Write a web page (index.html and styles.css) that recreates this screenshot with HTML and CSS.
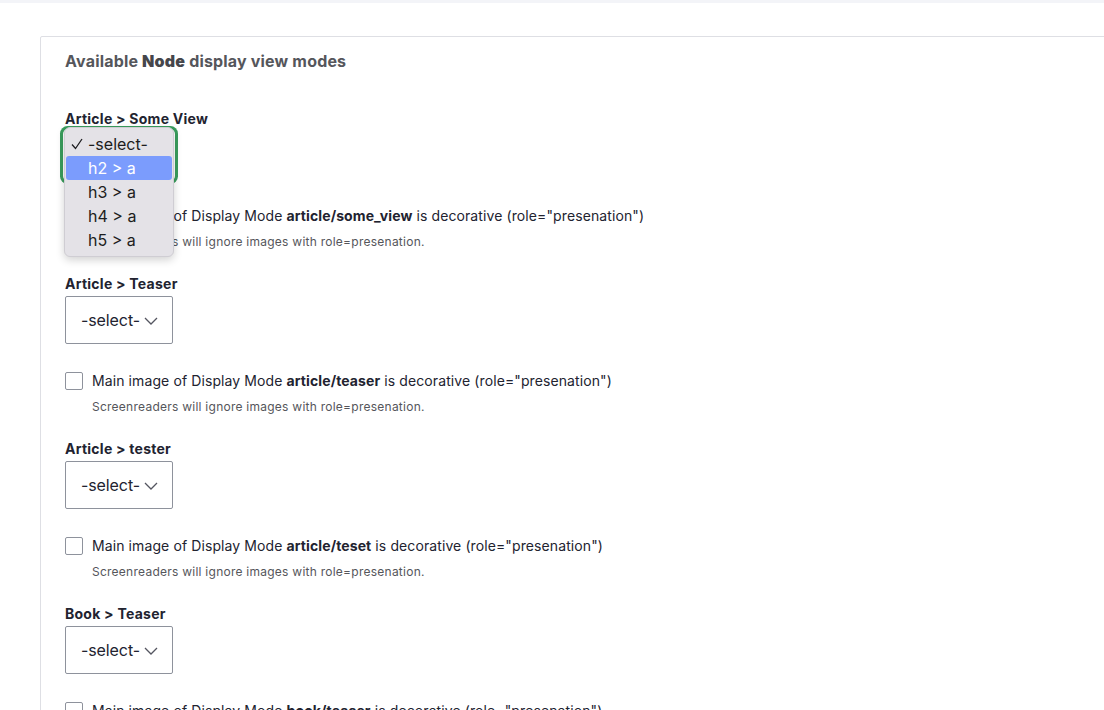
FILE: index.html
```html
<!DOCTYPE html>
<html>
<head>
<meta charset="utf-8">
<link rel="stylesheet" href="styles.css">
</head>
<body>
<div class="topbar"></div>
<div class="page">
  <section class="card">
    <h2 class="card-title">Available <b>Node</b> display view modes</h2>

    <div class="form-item">
      <div class="label">Article &gt; Some View</div>
      <div class="select-wrap">
        <div class="select is-focused">
          <span>-select-</span>
          <svg class="chev" width="14" height="8" viewBox="0 0 14 8"><polyline points="1,1 7,7 13,1" fill="none" stroke="#545560" stroke-width="1.3"/></svg>
        </div>
        <div class="popup">
          <div class="opt"><svg class="check" width="12" height="12" viewBox="0 0 12 12"><polyline points="1,6.5 4.5,10.5 11,1" fill="none" stroke="#1d1d20" stroke-width="1.3"/></svg>-select-</div>
          <div class="opt hl">h2 &gt; a</div>
          <div class="opt">h3 &gt; a</div>
          <div class="opt">h4 &gt; a</div>
          <div class="opt">h5 &gt; a</div>
        </div>
      </div>
      <div class="check-row">
        <span class="box"></span>
        <span class="check-label">Main image of Display Mode <b>article/some_view</b> is decorative (role="presenation")</span>
      </div>
      <div class="desc">Screenreaders will ignore images with role=presenation.</div>
    </div>

    <div class="form-item">
      <div class="label">Article &gt; Teaser</div>
      <div class="select-wrap">
        <div class="select">
          <span>-select-</span>
          <svg class="chev" width="14" height="8" viewBox="0 0 14 8"><polyline points="1,1 7,7 13,1" fill="none" stroke="#545560" stroke-width="1.3"/></svg>
        </div>
      </div>
      <div class="check-row">
        <span class="box"></span>
        <span class="check-label">Main image of Display Mode <b>article/teaser</b> is decorative (role="presenation")</span>
      </div>
      <div class="desc">Screenreaders will ignore images with role=presenation.</div>
    </div>

    <div class="form-item">
      <div class="label">Article &gt; tester</div>
      <div class="select-wrap">
        <div class="select">
          <span>-select-</span>
          <svg class="chev" width="14" height="8" viewBox="0 0 14 8"><polyline points="1,1 7,7 13,1" fill="none" stroke="#545560" stroke-width="1.3"/></svg>
        </div>
      </div>
      <div class="check-row">
        <span class="box"></span>
        <span class="check-label">Main image of Display Mode <b>article/teset</b> is decorative (role="presenation")</span>
      </div>
      <div class="desc">Screenreaders will ignore images with role=presenation.</div>
    </div>

    <div class="form-item">
      <div class="label">Book &gt; Teaser</div>
      <div class="select-wrap">
        <div class="select">
          <span>-select-</span>
          <svg class="chev" width="14" height="8" viewBox="0 0 14 8"><polyline points="1,1 7,7 13,1" fill="none" stroke="#545560" stroke-width="1.3"/></svg>
        </div>
      </div>
      <div class="check-row">
        <span class="box"></span>
        <span class="check-label">Main image of Display Mode <b>book/teaser</b> is decorative (role="presenation")</span>
      </div>
      <div class="desc">Screenreaders will ignore images with role=presenation.</div>
    </div>
  </section>
</div>
</body>
</html>
```

FILE: styles.css
```css
html, body {
  margin: 0;
  padding: 0;
  overflow: hidden;
  background: #fff;
  font-family: Inter, "Liberation Sans", sans-serif;
  color: #222330;
}
.topbar {
  height: 3px;
  background: #f3f4f8;
}
.page {
  padding: 33px 0 0 40px;
}
.card {
  width: 1120px;
  border: 1px solid #dedfe4;
  border-radius: 2px 0 0 0;
  padding: 14px 0 40px 24px;
  box-sizing: border-box;
}
.card-title {
  margin: 0;
  font-size: 16px;
  line-height: 20px;
  font-weight: 700;
  color: #55565b;
  letter-spacing: 0.18px;
}
.card-title b { color: #45464b; }
.form-item {
  margin-top: 25px;
}
.card-title + .form-item { margin-top: 39px; }
.label {
  font-size: 14px;
  line-height: 18px;
  font-weight: 700;
  color: #222330;
  margin-bottom: 3px;
  letter-spacing: 0.25px;
}
.select-wrap {
  position: relative;
  width: 108px;
}
.select {
  box-sizing: border-box;
  width: 108px;
  height: 48px;
  border: 1px solid #8e929c;
  border-radius: 2px;
  display: flex;
  align-items: center;
  padding-left: 15px;
  gap: 4px;
  font-size: 16px;
  color: #222330;
  background: #fff;
  letter-spacing: -0.1px;
}
.select.is-focused {
  box-shadow: 0 0 0 2px #fff, 0 0 0 5px #3a9d5d;
  border-radius: 3px;
}
.chev { flex: none; margin-top: 1px; }
.popup {
  position: absolute;
  left: -1px;
  top: -4px;
  width: 110px;
  box-sizing: border-box;
  padding: 4px 1px;
  background: #e4e2e7;
  border: 1px solid #cfcdd3;
  border-radius: 6px;
  box-shadow: 0 3px 8px rgba(0,0,0,0.18);
  z-index: 5;
}
.opt {
  position: relative;
  height: 24px;
  line-height: 24px;
  padding-left: 22px;
  font-size: 16px;
  color: #1d1d20;
  border-radius: 3px;
}
.opt.hl {
  background: #7b9cfd;
  color: #fff;
}
.check {
  position: absolute;
  left: 5px;
  top: 6px;
}
.check-row {
  margin-top: 28px;
  display: flex;
  align-items: center;
  gap: 9px;
}
.box {
  width: 18px;
  height: 18px;
  box-sizing: border-box;
  border: 1px solid #8e929c;
  border-radius: 2px;
  background: #fff;
  flex: none;
}
.check-label {
  font-size: 14px;
  line-height: 18px;
  color: #222330;
  letter-spacing: 0.1px;
}
.check-label b { font-weight: 700; }
.desc {
  margin-top: 9px;
  padding-left: 27px;
  font-size: 12px;
  line-height: 16px;
  color: #55565b;
  letter-spacing: 0.25px;
}
```
